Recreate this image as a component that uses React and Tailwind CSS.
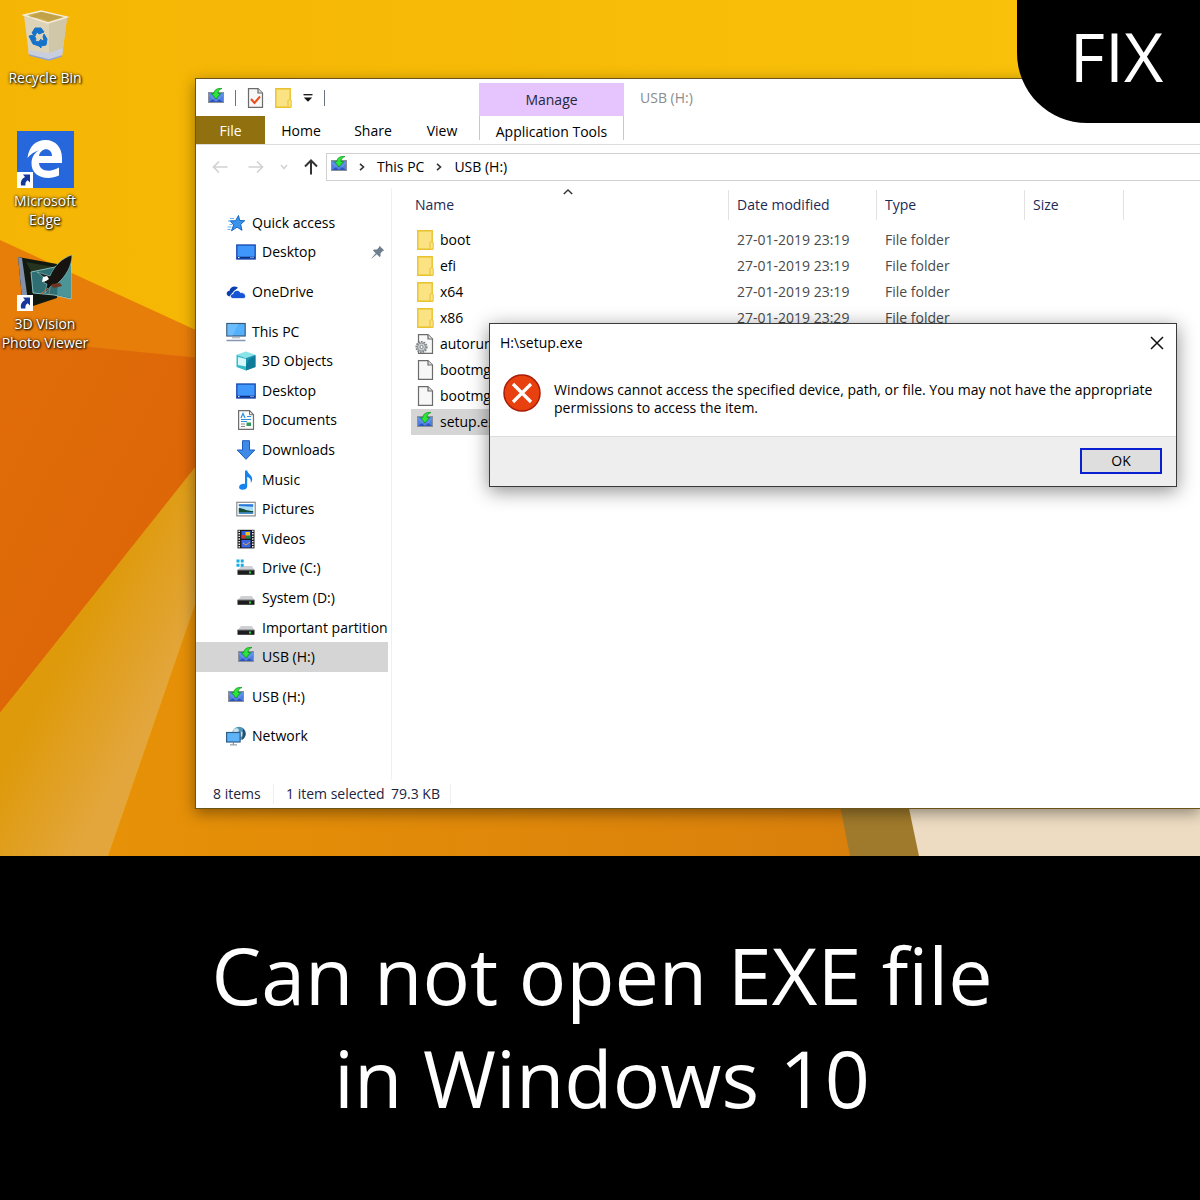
import React from 'react';

const UsbIcon = () => (
  <svg viewBox="0 2 16 16" className="w-4 h-4 shrink-0 overflow-visible">
    <rect x="0.5" y="4.5" width="15" height="10" fill="#4f7fe0" stroke="#8a8f9a" />
    <path d="M1 14L8 9l7 5z" fill="#2b55bd" />
    <path d="M1 5l7 6 7-6v3l-7 6-7-6z" fill="#6d9cf0" opacity=".6" />
    <path d="M14 0.500C9 0 6 2 6 5.500H3.500L8 11l4.500-5.500H10C10 3 11 1.500 14 .5z" fill="#2ee63a" stroke="#0c9a1c" strokeWidth=".8" />
  </svg>
);

const FolderIcon = () => (
  <svg viewBox="0 0 17 20" className="w-[17px] h-5 shrink-0">
    <path d="M.8.8h14.400v18.400H.8z" fill="#fbe384" stroke="#e8c22c" strokeWidth="1.4" />
    <path d="M13 12.500c0-1 3.200-1 3.200 0v6.700H13z" fill="#fbe384" stroke="#e8c22c" />
  </svg>
);

const FileIcon = ({ children }) => (
  <svg viewBox="0 0 17 20" className="w-[17px] h-5 shrink-0 overflow-visible">
    <path d="M1.500.7H11L15.500 5v14.300h-14z" fill="#f7f7f7" stroke="#6b6b6b" strokeWidth="1.200" />
    <path d="M11 .7V5h4.500" fill="#ddd" stroke="#6b6b6b" strokeWidth="1.200" />
    {children}
  </svg>
);

const AutorunIcon = () => (
  <FileIcon>
    <circle cx="4.500" cy="13" r="5.200" fill="#d5d8da" stroke="#7d8286" strokeWidth="1.800" strokeDasharray="1.600 1" />
    <circle cx="4.500" cy="13" r="4" fill="#cfd3d6" stroke="#8b9094" />
    <circle cx="4.500" cy="13" r="1.600" fill="#fff" stroke="#7d8286" />
  </FileIcon>
);

const CheckDocIcon = () => (
  <FileIcon>
    <path d="M4 11l3.500 4L13 8.500" fill="none" stroke="#ea4c1c" strokeWidth="2" />
  </FileIcon>
);

const StarIcon = () => (
  <svg viewBox="0 0 20 20" className="w-5 h-5">
    <path d="M12.500 2.500l1.200 5 5 .2-4 3.600 1.300 6-4.900-3.200-5.600 3.700 2.200-6-4-4h5.800z" fill="#3b93ea" stroke="#1467c4" />
    <path d="M4 5.500h4M2 8h3M3.500 11.500h3M1.500 14h4M1.500 16.500h3" stroke="#6fb2f2" strokeWidth="1.200" />
  </svg>
);

const DesktopIcon = () => (
  <svg viewBox="0 0 20 20" className="w-5 h-5">
    <rect x=".8" y="3" width="18.400" height="14" fill="#3f96fb" stroke="#1446ae" strokeWidth="1.300" />
    <path d="M1 15.600h18" stroke="#0b2f86" strokeWidth="1.800" />
    <path d="M2 15.600h1.500M14.500 15.600h1M16.500 15.600h1" stroke="#fff" strokeWidth="1" />
  </svg>
);

const OneDriveIcon = () => (
  <svg viewBox="0 0 20 20" className="w-5 h-5">
    <path d="M3.500 14.500C-.5 13.500 0 9 3.500 8.800 4 5 8.500 3 12 5.800L8 9z" fill="#0a3fb0" />
    <path d="M7 16.500c-3.500-.3-3.300-4.500 0-4.700C7.500 8 13 7 14.500 10.700c4.800-.9 6.500 4.800 3.500 5.800z" fill="#1554d4" stroke="#fff" strokeWidth=".7" />
  </svg>
);

const PcIcon = () => (
  <svg viewBox="0 0 20 20" className="w-5 h-5">
    <rect x=".8" y="1.500" width="18.400" height="12.500" fill="#53b0fa" stroke="#3c5a78" strokeWidth="1.200" />
    <path d="M1.500 2h11l-6 11.500h-5z" fill="#7cc7ff" opacity=".6" />
    <path d="M6 15.800h8" stroke="#9aa7b5" />
    <path d="M.5 18.500h19" stroke="#8695b0" strokeWidth="1.500" />
  </svg>
);

const CubeIcon = () => (
  <svg viewBox="0 0 20 20" className="w-5 h-5">
    <path d="M10 .5l9.500 3.300L10 7 .5 3.800z" fill="#8be3ea" />
    <path d="M.5 3.800L10 7v12.500L.5 16z" fill="#35bccb" />
    <path d="M2 6l8 2v7.500L2 14z" fill="#d8f7fa" />
    <path d="M19.500 3.800L10 7v12.500l9.500-3.500z" fill="#1793ae" />
    <path d="M13 8.500l6.500-4V16L10 19.500v-5z" fill="#0c6d8e" opacity=".65" />
  </svg>
);

const DocIcon = () => (
  <svg viewBox="0 0 20 20" className="w-5 h-5">
    <path d="M2.600.7h10.900l4 4v14.600H2.600z" fill="#fbfbfb" stroke="#6e6e6e" strokeWidth="1.200" />
    <path d="M13.500.7v4h4" fill="none" stroke="#6e6e6e" />
    <path d="M5 8l2-4.500L9 8M11 6.500h4M5 9.500h10M5 11.500h6" fill="none" stroke="#2f8fe0" strokeWidth="1.200" />
    <path d="M5 14h4M5 16.500h4" stroke="#888" />
    <path d="M10.500 12.500H15v3.500h-4.500z" fill="#2f9a5a" />
  </svg>
);

const DownIcon = () => (
  <svg viewBox="0 0 20 20" className="w-5 h-5">
    <path d="M6.500.7h7v9.300h5.300L10 19.300 1.200 10h5.300z" fill="#3e8ae6" stroke="#1f5fc0" />
  </svg>
);

const MusicIcon = () => (
  <svg viewBox="0 0 20 20" className="w-5 h-5">
    <path d="M9 .5h2.200c.6 3.500 5.300 4.600 5 9-.1 1.400-.7 2.500-1.500 3.500.7-3.500-1-5.500-3.500-6v9.500c0 2-2.200 3.300-4.700 3.300-2.300 0-3.700-1.300-3.400-3C3.500 14.500 6.500 13.400 9 14z" fill="#1583ee" />
  </svg>
);

const PictureIcon = () => (
  <svg viewBox="0 0 20 20" className="w-5 h-5">
    <rect x=".8" y="3.300" width="18.400" height="13.600" fill="#fff" stroke="#8b8b8b" strokeWidth="1.200" />
    <path d="M2.800 5.300h14.400v9.500H2.800z" fill="#a9dcf7" />
    <path d="M2.800 5.300h14.400v2.500L2.800 7z" fill="#2878d8" />
    <path d="M2.800 9c3-.5 7 3 14.400 3v1.500H2.800z" fill="#144d35" />
    <path d="M2.800 13.300h14.400v1.500H2.800z" fill="#2d76b8" />
  </svg>
);

const VideoIcon = () => (
  <svg viewBox="0 0 20 20" className="w-5 h-5">
    <rect x="1.500" y=".8" width="17" height="18.600" fill="#1a1a1a" />
    <path d="M3.200 1.500v18M16.800 1.500v18" stroke="#f2f2f2" strokeWidth="1.500" strokeDasharray="1.400 1.200" />
    <path d="M5.500 2h9v7.500h-9z" fill="#345fe0" />
    <path d="M5.500 11h9v7.500h-9z" fill="#3a66e6" />
    <path d="M9.500 3h4.500v3.500H9.500z" fill="#f2c318" />
    <path d="M5.500 6h4v3.500h-4z" fill="#d9342b" />
    <path d="M10 7h4.500v2.500H10z" fill="#1a8a3a" />
    <path d="M7 14l3 2 4-3" stroke="#e8a33c" fill="none" />
  </svg>
);

const DriveIcon = ({ windows }) => (
  <svg viewBox="0 0 20 20" className="w-5 h-5">
    <path d="M5 8h11l2.500 4.500h-17z" fill="#cfd0d3" />
    <path d="M1.500 12h17v4.800h-17z" fill="#1d1d1f" />
    <path d="M1.500 12h17" stroke="#77797c" />
    <path d="M13 14.500h2" stroke="#21e03a" strokeWidth="1.800" />
    {windows && <path d="M.5 1.500h3v3h-3zM4.700 1.500h3v3h-3zM.5 5.700h3v3h-3zM4.700 5.700h3v3h-3z" fill="#13aeea" />}
  </svg>
);

const NetworkIcon = () => (
  <svg viewBox="0 0 20 20" className="w-5 h-5">
    <circle cx="13" cy="7.500" r="6.800" fill="#4f93b8" />
    <path d="M8 3c3-2 6 0 4.500 2.500S8 8 7 6zM14 6c3-1 4 1 3.500 4l-3 1z" fill="#c8e3ee" />
    <path d="M17 2.500c4 4 3 9-1 11.500z" fill="#1f4f72" />
    <rect x=".6" y="6.500" width="13.500" height="9.500" fill="#5fb4f8" stroke="#2d5d8b" strokeWidth="1.200" />
    <path d="M7.300 16v2.500M4 18.900h7" stroke="#7b8794" />
  </svg>
);

const PinIcon = () => (
  <svg viewBox="0 0 14 14" className="w-[14px] h-[14px]">
    <path d="M8.500.8l4.700 4.700-1.500.4-2.200 2.300.1 2.900-1 1L5.800 9.300.8 13.500.5 13.200l4.200-5L2 5.500l1-1 2.900.1 2.200-2.300z" fill="#6e7f8f" />
  </svg>
);

const RecycleBinIcon = () => (
  <svg viewBox="0 0 57 57" className="w-[57px] h-[57px]">
    <path d="M7 8l25 6 18-4-5 38-13 4-20-5z" fill="#ddd3b8" />
    <path d="M32 14l18-4-5 38-13 4z" fill="#d0c6a8" />
    <path d="M7 7l17-4 26 6-19 6z" fill="#cfae50" stroke="#f3ecd8" strokeWidth="1.500" />
    <path d="M24 4v6l-12-1zM24 4l22 5-14 4-8-3z" fill="#b99a45" opacity=".6" />
    <path d="M11 42l21 3 14-5-1 8-13 4-20-5z" fill="#c9cede" />
    <path d="M12 47l20 5 13-4" fill="none" stroke="#93a3cf" strokeWidth="1.500" />
    <path d="M15 25l3-5 6 0 3 4-5 2-2-2-2 4zM12 28l5-1 2 4-1 2 4 1v4l-6-2zM27 26l3 5-1 6-5 1v2l-4-4 4-5v2l3-1-1-3z" fill="#1673c9" stroke="#1673c9" />
  </svg>
);

const ShortcutArrow = () => (
  <g>
    <path d="M0 41h16v16H0z" fill="#fff" />
    <path d="M6 43.500h7v8l-2.300-2.300c-2 1.300-2.600 3-2.200 5.300H4c-.8-4 .5-6.800 4-8.500z" fill="#16389b" />
  </g>
);

const EdgeIcon = () => (
  <svg viewBox="0 0 57 57" className="w-[57px] h-[57px]">
    <rect width="57" height="57" fill="#2668dc" />
    <path d="M10.500 27C12 15 19 9 28.500 9 39 9 45 17 45 27v5H22c.5 9 12 9.500 20 4.500v8C30 50 14 46 14.500 32c.2-6 3-10.500 8-13-5 1.500-9.500 4.500-12 8zM22 25h13c0-9-11.500-9-13 0z" fill="#fff" />
    <ShortcutArrow />
  </svg>
);

const PhotoViewerIcon = () => (
  <svg viewBox="0 0 57 57" className="w-[57px] h-[57px]">
    <path d="M1 3l39 7v34L16 52 5 44z" fill="#10180f" />
    <path d="M1 3l4 1 6 43-6-3z" fill="#8290aa" />
    <path d="M9 8l28 5-22 6z" fill="#24341f" />
    <path d="M14 18l24-5 16-3v35l-17-4-21-2z" fill="#2f6f74" stroke="#9fd6d6" strokeWidth=".8" />
    <path d="M42 14l12-3v33l-14-3z" fill="#4b9497" />
    <path d="M55 1C45 4 37 12 33 22l-13-4 8 6-1 5 3 1-2 9 6-7 6-2C49 22 55 12 55 1z" fill="#161310" stroke="#8fd4d4" strokeWidth=".6" />
    <path d="M26 23l4-1 2 3-3 2-4 1z" fill="#fff" />
    <path d="M35 30l8-1 2 3-8 2-3-2z" fill="#6d3420" />
    <path d="M31 34l-6 5M33 34l-1 6M24 39l3 1" fill="none" stroke="#c0704a" />
    <ShortcutArrow />
  </svg>
);

const Wallpaper = () => (
  <svg viewBox="0 0 1200 856" preserveAspectRatio="xMinYMin slice" className="absolute inset-0 w-full h-full">
    <defs>
      <linearGradient id="sky" x1="0" y1="0" x2="1" y2="0">
        <stop offset="0" stopColor="#f5b504" />
        <stop offset="1" stopColor="#f9c30a" />
      </linearGradient>
      <linearGradient id="ray" gradientUnits="userSpaceOnUse" x1="70" y1="640" x2="165" y2="690">
        <stop offset="0" stopColor="#de9a0a" />
        <stop offset="1" stopColor="#e3a63c" />
      </linearGradient>
      <linearGradient id="floor" gradientUnits="userSpaceOnUse" x1="110" y1="0" x2="850" y2="0">
        <stop offset="0" stopColor="#e69107" />
        <stop offset="1" stopColor="#d9800c" />
      </linearGradient>
      <linearGradient id="ember" x1="0" y1="0" x2="1" y2="1">
        <stop offset="0" stopColor="#e06c08" />
        <stop offset="1" stopColor="#dc6407" />
      </linearGradient>
    </defs>
    <rect width="1200" height="856" fill="url(#sky)" />
    <path d="M0 240L200 332V360L0 340z" fill="#e87e0a" />
    <path d="M0 338L200 358V465L0 713z" fill="url(#ember)" />
    <path d="M200 461L0 713V856H108L200 590z" fill="url(#ray)" />
    <path d="M200 590L108 856H850V780H200z" fill="url(#floor)" />
    <path d="M835 780L850 856H920L905 780z" fill="#a07a2c" />
    <path d="M903 780L919 856H1200V780z" fill="#eddcc2" />
  </svg>
);

const shortcuts = [
  { label: 'Recycle Bin', icon: <RecycleBinIcon /> },
  { label: 'Microsoft Edge', icon: <EdgeIcon /> },
  { label: '3D Vision Photo Viewer', icon: <PhotoViewerIcon /> },
];

const navItems = [
  { label: 'Quick access', icon: <StarIcon />, root: true },
  { label: 'Desktop', icon: <DesktopIcon />, pinned: true },
  { label: 'OneDrive', icon: <OneDriveIcon />, root: true },
  { label: 'This PC', icon: <PcIcon />, root: true },
  { label: '3D Objects', icon: <CubeIcon /> },
  { label: 'Desktop', icon: <DesktopIcon /> },
  { label: 'Documents', icon: <DocIcon /> },
  { label: 'Downloads', icon: <DownIcon /> },
  { label: 'Music', icon: <MusicIcon /> },
  { label: 'Pictures', icon: <PictureIcon /> },
  { label: 'Videos', icon: <VideoIcon /> },
  { label: 'Drive (C:)', icon: <DriveIcon windows /> },
  { label: 'System (D:)', icon: <DriveIcon /> },
  { label: 'Important partition', icon: <DriveIcon /> },
  { label: 'USB (H:)', icon: <UsbIcon />, selected: true },
  { label: 'USB (H:)', icon: <UsbIcon />, root: true },
  { label: 'Network', icon: <NetworkIcon />, root: true },
];

const files = [
  { name: 'boot', date: '27-01-2019 23:19', type: 'File folder', icon: <FolderIcon /> },
  { name: 'efi', date: '27-01-2019 23:19', type: 'File folder', icon: <FolderIcon /> },
  { name: 'x64', date: '27-01-2019 23:19', type: 'File folder', icon: <FolderIcon /> },
  { name: 'x86', date: '27-01-2019 23:29', type: 'File folder', icon: <FolderIcon /> },
  { name: 'autorun', icon: <AutorunIcon /> },
  { name: 'bootmgr', icon: <FileIcon /> },
  { name: 'bootmgr.efi', icon: <FileIcon /> },
  { name: 'setup.exe', icon: <UsbIcon />, selected: true },
];

const Ribbon = () => (
  <header>
    <div className="flex h-[37px]">
      <div className="w-[283px] pl-3 flex items-center gap-[11px]">
        <UsbIcon />
        <span className="w-px h-4 bg-gray-500" />
        <button aria-label="Properties"><CheckDocIcon /></button>
        <button aria-label="New folder"><FolderIcon /></button>
        <button aria-label="Customize toolbar">
          <svg viewBox="0 0 10 10" className="w-[10px] h-[10px]">
            <path d="M.5 1.700h9" stroke="#111" strokeWidth="1.300" />
            <path d="M.8 4.500h8.400L5 8.800z" fill="#111" />
          </svg>
        </button>
        <span className="w-px h-4 bg-gray-500" />
      </div>
      <div className="w-[145px] mt-1 bg-[#e6c4fe] flex items-center justify-center text-gray-800">Manage</div>
      <h1 className="pl-4 self-center text-[#8c8c8c]">USB (H:)</h1>
    </div>
    <nav className="flex h-[29px] border-b border-[#dcdcdc]">
      <button className="w-[69px] pt-0.5 mr-px bg-[#91700f] text-white">File</button>
      <button className="w-[70px] pt-0.5">Home</button>
      <button className="w-[74px] pt-0.5">Share</button>
      <button className="w-[64px] pt-0.5 mr-[5px]">View</button>
      <button className="w-[145px] mb-1 pt-1.5 border-x border-[#c8c8c8]">Application Tools</button>
    </nav>
  </header>
);

const Crumb = () => (
  <span className="w-[30px] flex justify-center">
    <svg viewBox="0 0 6 8" className="w-[6px] h-2">
      <path d="M1 .8L4.500 4 1 7.200" fill="none" stroke="#333" strokeWidth="1.600" />
    </svg>
  </span>
);

const AddressBar = () => (
  <div className="flex items-center h-[43px] pl-4">
    <button aria-label="Back" className="mr-5">
      <svg viewBox="0 0 16 14" className="w-4 h-[14px]"><path d="M15.500 7H1.500M7 1.500L1.500 7 7 12.500" fill="none" stroke="#d2d2d2" strokeWidth="1.700" /></svg>
    </button>
    <button aria-label="Forward" className="mr-4">
      <svg viewBox="0 0 16 14" className="w-4 h-[14px]"><path d="M.5 7h14M9 1.500L14.500 7 9 12.500" fill="none" stroke="#d2d2d2" strokeWidth="1.700" /></svg>
    </button>
    <button aria-label="Recent locations" className="mr-4">
      <svg viewBox="0 0 8 6" className="w-2 h-[6px]"><path d="M1 1l3 3.500L7 1" fill="none" stroke="#d2d2d2" strokeWidth="1.500" /></svg>
    </button>
    <button aria-label="Up" className="mr-2">
      <svg viewBox="0 0 14 16" className="w-[14px] h-4"><path d="M7 15.500V1.500M1 7.500l6-6 6 6" fill="none" stroke="#333" strokeWidth="2" /></svg>
    </button>
    <div className="flex-1 flex items-center h-7 pl-1 border border-r-0 border-[#d0d0d0]">
      <span className="mb-0.5"><UsbIcon /></span>
      <Crumb />
      <span>This PC</span>
      <Crumb />
      <span>USB (H:)</span>
    </div>
  </div>
);

const NavPane = () => (
  <aside className="w-[196px] shrink-0 pt-5 pb-[29px] border-r border-[#f0f0f0]">
    <ul className="h-[543px] flex flex-col mr-[3px]">
      {navItems.map((item, i) => (
        <li
          key={i}
          className={`flex-1 flex items-center pr-[3px] whitespace-nowrap ${item.root ? 'pl-[30px]' : 'pl-[40px]'} ${item.root && i > 0 ? 'mt-[10px]' : ''} ${item.selected ? 'bg-[#d5d5d5]' : ''}`}
        >
          <span className="w-5 mr-[6px] flex justify-center shrink-0">{item.icon}</span>
          <span>{item.label}</span>
          {item.pinned && <span className="ml-auto"><PinIcon /></span>}
        </li>
      ))}
    </ul>
  </aside>
);

const FileList = () => (
  <main className="relative flex-1 pt-0.5 pl-[19px]">
    <svg viewBox="0 0 10 6" className="absolute left-[171px] top-px w-[10px] h-[6px]">
      <path d="M.8 5L5 1l4.200 4" fill="none" stroke="#333" strokeWidth="1.400" />
    </svg>
    <table className="w-[713px] table-fixed text-left">
      <thead>
        <tr className="text-[#1c2a55]">
          {[['Name', 'w-[318px] pl-1'], ['Date modified', 'w-[148px] pl-2'], ['Type', 'w-[148px] pl-2'], ['Size', 'pl-2']].map(([name, cls]) => (
            <th key={name} className={`${cls} p-0 pb-[7px] font-normal`}>
              <div className="h-[30px] flex items-center border-r border-[#e2e2e2]">{name}</div>
            </th>
          ))}
        </tr>
      </thead>
      <tbody>
        {files.map((file) => (
          <tr key={file.name} className={`h-[26px] ${file.selected ? 'bg-[#d5d5d5]' : ''}`}>
            <td className="p-0 pl-[6px]">
              <div className="flex items-center">
                <span className="w-[17px] mr-[6px]">{file.icon}</span>
                {file.name}
              </div>
            </td>
            <td className="p-0 pl-2 text-[#4a4a4a]">{file.date}</td>
            <td className="p-0 pl-2 text-[#4a4a4a]">{file.type}</td>
            <td className="p-0" />
          </tr>
        ))}
      </tbody>
    </table>
  </main>
);

const ExplorerWindow = () => (
  <div className="relative flex-1 min-w-0 mt-[78px] mb-[47px] flex flex-col bg-white border border-r-0 border-[#6b5418] shadow-[0_4px_14px_rgba(0,0,0,0.4)]">
    <Ribbon />
    <AddressBar />
    <div className="flex">
      <NavPane />
      <FileList />
    </div>
    <footer className="flex items-center h-7 pl-[17px] text-[#1c2340]">
      <span className="w-[61px] border-r border-[#eee]">8 items</span>
      <span className="w-[105px] ml-3">1 item selected</span>
      <span className="w-[60px] border-r border-[#eee]">79.3 KB</span>
    </footer>
  </div>
);

const ErrorDialog = () => (
  <div
    role="alertdialog"
    aria-labelledby="dialog-title"
    className="absolute left-[489px] top-[323px] w-[688px] bg-white border border-[#3a3a3a] shadow-[0_4px_18px_rgba(0,0,0,0.45)]"
  >
    <div className="flex items-center justify-between h-[38px] pl-[10px] pr-3">
      <h2 id="dialog-title">H:\setup.exe</h2>
      <button aria-label="Close">
        <svg viewBox="0 0 14 14" className="w-[14px] h-[14px]"><path d="M1 1l12 12M13 1L1 13" stroke="#111" strokeWidth="1.500" /></svg>
      </button>
    </div>
    <div className="flex h-[74px] pl-[13px] pt-3">
      <svg viewBox="0 0 38 38" className="w-[38px] h-[38px] mr-[13px] shrink-0">
        <circle cx="19" cy="19" r="18" fill="#e8400f" stroke="#a81c08" strokeWidth="1.500" />
        <path d="M10 10l18 18M28 10L10 28" stroke="#fff" strokeWidth="3.200" />
      </svg>
      <p className="pt-[7px] leading-[18px]">
        Windows cannot access the specified device, path, or file. You may not have the appropriate<br />
        permissions to access the item.
      </p>
    </div>
    <div className="flex items-center justify-end h-[50px] pr-[14px] pb-0.5 bg-[#eeeeee] border-t border-[#dedede]">
      <button className="w-[82px] h-[26px] bg-[#dedede] border-2 border-[#0a1fd0]">OK</button>
    </div>
  </div>
);

const App = () => {
  return (
    <div className="min-h-screen flex flex-col bg-black font-['Open_Sans',sans-serif] text-sm text-black">
      <section className="relative flex overflow-hidden">
        <Wallpaper />
        <div className="relative w-[90px] mr-[105px] pt-2 flex flex-col">
          {shortcuts.map((item) => (
            <div key={item.label} className="h-[123px] flex flex-col items-center text-center">
              {item.icon}
              <span className="mt-[3px] leading-[19px] text-white [text-shadow:1px_1px_2px_#000,0_0_3px_#000]">{item.label}</span>
            </div>
          ))}
        </div>
        <ExplorerWindow />
        <ErrorDialog />
        <div className="absolute top-0 right-0 w-[183px] h-[123px] pl-4 pb-3 rounded-bl-[70px] bg-black text-white text-[68px] font-normal flex items-center justify-center">
          FIX
        </div>
      </section>
      <div className="flex-1 flex items-center justify-center pb-1 pl-1 text-center text-white text-[79px] leading-[103px] font-normal">
        <p>Can not open EXE file<br />in Windows 10</p>
      </div>
    </div>
  );
};

export default App;
